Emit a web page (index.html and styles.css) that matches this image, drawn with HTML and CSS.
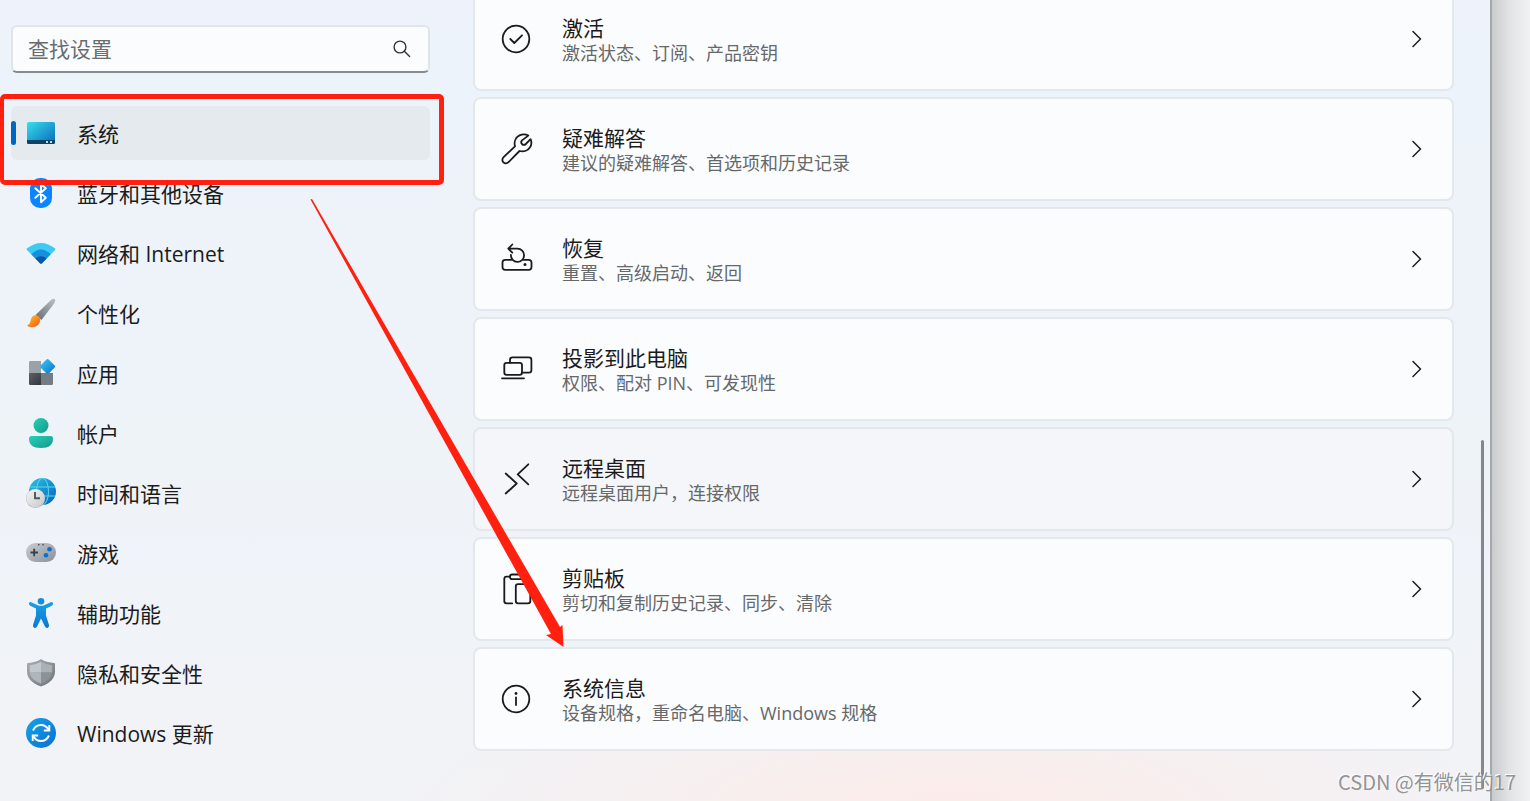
FILE: index.html
```html
<!DOCTYPE html>
<html lang="zh-CN">
<head>
<meta charset="utf-8">
<meta name="viewport" content="width=device-width, initial-scale=1">
<title>设置</title>
<link rel="stylesheet" href="styles.css">
</head>
<body>
<div class="desktop">
  <div class="window">
    <aside class="sidebar">
      <form class="search" role="search">
        <input class="search-input" type="search" placeholder="查找设置" aria-label="查找设置">
        <button class="search-button" type="button" aria-label="搜索">
          <svg width="18" height="18" viewBox="0 0 18 18" fill="none" stroke="#333" stroke-width="1.4" stroke-linecap="round"><circle cx="7" cy="7" r="5.9"/><path d="M11.3 11.3L16.6 16.6"/></svg>
        </button>
      </form>
      <nav class="nav" aria-label="设置类别">
        <a class="nav-item is-active" href="#system" aria-current="page">
          <svg class="nav-icon" viewBox="0 0 30 30"><defs><linearGradient id="g-sys" x1="0" y1="0" x2="1" y2="1"><stop offset="0" stop-color="#35e0ea"/><stop offset="1" stop-color="#0b66bd"/></linearGradient></defs><rect x="1" y="4" width="28" height="22" rx="1.8" fill="url(#g-sys)"/><path d="M1 22h28v2.4a1.6 1.6 0 0 1-1.6 1.6H2.6A1.6 1.6 0 0 1 1 24.4z" fill="#0b4566"/><path d="M20 23h2v2h-2zM24 23h2v2h-2z" fill="#b9dcec"/></svg>
          <span>系统</span>
        </a>
        <a class="nav-item" href="#bluetooth">
          <svg class="nav-icon" viewBox="0 0 30 30"><rect x="4" y="0" width="22" height="30" rx="10" fill="#0a84ff"/><path d="M9.3 10.3L19.8 19.8L15 24.2V6L19.8 10.3L9.3 19.8" fill="none" stroke="#fff" stroke-width="1.9" stroke-linejoin="round" stroke-linecap="round"/></svg>
          <span>蓝牙和其他设备</span>
        </a>
        <a class="nav-item" href="#network">
          <svg class="nav-icon" viewBox="0 0 30 30"><path d="M.8 10.500Q15-.7 29.200 10.500Q29.800 11.200 29 12L16 25.300Q15 26.200 14 25.300L1 12Q.2 11.200.8 10.500z" fill="#3ccbf4"/><path d="M5.300 16.300Q15 6.500 24.700 16.300L16 25.300Q15 26.200 14 25.300z" fill="#1490df"/><path d="M9.500 20.600Q15 15.800 20.500 20.600L16 25.300Q15 26.200 14 25.300z" fill="#0a57a5"/></svg>
          <span>网络和 Internet</span>
        </a>
        <a class="nav-item" href="#personalization">
          <svg class="nav-icon" viewBox="0 0 30 30"><defs><linearGradient id="g-handle" x1="0" y1="1" x2="1" y2="0"><stop offset="0" stop-color="#646b73"/><stop offset="1" stop-color="#bac1c9"/></linearGradient><linearGradient id="g-tip" x1="0" y1="0" x2="1" y2="1"><stop offset="0.2" stop-color="#ffae2c"/><stop offset="1" stop-color="#f0560d"/></linearGradient></defs><path d="M9.500 17L25 2Q27.500 0 29 1.200Q30 2.500 28.500 5L15.500 22z" fill="url(#g-handle)"/><path d="M1 27.500Q4 26.500 4.700 22Q5.800 17 10 17.200Q14.500 18.200 14.300 22Q13.500 29 6 29.200Q2 29.300 1 27.500z" fill="url(#g-tip)"/></svg>
          <span>个性化</span>
        </a>
        <a class="nav-item" href="#apps">
          <svg class="nav-icon" viewBox="0 0 30 30"><defs><linearGradient id="g-dark" x1="0" y1="0" x2="1" y2="1"><stop offset="0" stop-color="#5c6166"/><stop offset="1" stop-color="#33373b"/></linearGradient><linearGradient id="g-dia" x1="0" y1="0" x2="1" y2="1"><stop offset="0" stop-color="#3ccbf4"/><stop offset="1" stop-color="#0a6fd0"/></linearGradient></defs><path d="M4.200 3H15v12H3V4.200Q3 3 4.200 3z" fill="#99a1a9"/><path d="M3 15h12v12H4.200Q3 27 3 25.800z" fill="url(#g-dark)"/><path d="M15 15h12v10.800Q27 27 25.800 27H15z" fill="#757c83"/><path d="M20.500 1.500Q21.600.5 22.700 1.500L28.700 7.500Q29.700 8.500 28.700 9.500L22.700 15.500Q21.600 16.500 20.500 15.500L14.500 9.500Q13.500 8.500 14.500 7.500z" fill="url(#g-dia)"/></svg>
          <span>应用</span>
        </a>
        <a class="nav-item" href="#accounts">
          <svg class="nav-icon" viewBox="0 0 30 30"><defs><linearGradient id="g-person" x1="0" y1="0" x2="1" y2="1"><stop offset="0" stop-color="#27d0b8"/><stop offset="1" stop-color="#14998a"/></linearGradient></defs><circle cx="15" cy="7.500" r="7.500" fill="url(#g-person)"/><path d="M5.500 18h19Q27 18 27 20.500Q27 30 15 30Q3 30 3 20.500Q3 18 5.500 18z" fill="url(#g-person)"/></svg>
          <span>帐户</span>
        </a>
        <a class="nav-item" href="#time">
          <svg class="nav-icon" viewBox="0 0 30 30"><defs><linearGradient id="g-globe" x1="0" y1="0" x2="1" y2="1"><stop offset="0" stop-color="#2bc5e2"/><stop offset="1" stop-color="#075fc0"/></linearGradient><linearGradient id="g-clock" x1="0" y1="0" x2="1" y2="1"><stop offset="0" stop-color="#f5f5f5"/><stop offset="1" stop-color="#c6c8ca"/></linearGradient></defs><circle cx="16.500" cy="13.500" r="13.500" fill="url(#g-globe)"/><g fill="none" stroke="#59daf1" stroke-width="1"><ellipse cx="16.500" cy="13.500" rx="6" ry="13.300"/><path d="M4.500 9h24.500M4.500 18h24.500"/></g><circle cx="9.500" cy="20.500" r="9.500" fill="#a8afb5"/><circle cx="9.500" cy="20.200" r="9.200" fill="url(#g-clock)"/><path d="M9 14V20.200H14" fill="none" stroke="#50555a" stroke-width="1.900"/></svg>
          <span>时间和语言</span>
        </a>
        <a class="nav-item" href="#gaming">
          <svg class="nav-icon" viewBox="0 0 30 30"><defs><linearGradient id="g-pad" x1="0" y1="0" x2="1" y2="1"><stop offset="0" stop-color="#c9ced2"/><stop offset="1" stop-color="#889098"/></linearGradient></defs><rect y="5" width="30" height="19" rx="9.500" fill="url(#g-pad)"/><path d="M4.500 14.500h7.500M8.200 10.800v7.500" stroke="#3c4146" stroke-width="1.800"/><circle cx="23.500" cy="11.300" r="2.300" fill="#0a6fd0"/><circle cx="20" cy="17.300" r="2.300" fill="#0a6fd0"/><circle cx="12.800" cy="6.700" r=".8" fill="#33383d"/><circle cx="17" cy="6.700" r=".8" fill="#33383d"/></svg>
          <span>游戏</span>
        </a>
        <a class="nav-item" href="#accessibility">
          <svg class="nav-icon" viewBox="0 0 30 30"><defs><linearGradient id="g-acc" x1="0" y1="0" x2="0" y2="1"><stop offset="0" stop-color="#199fe6"/><stop offset="1" stop-color="#0a78d4"/></linearGradient></defs><circle cx="15" cy="3.300" r="3.300" fill="#128ee0"/><path d="M5.300 4.200L11.700 7.300Q15 8.400 18.300 7.300L24.700 4.200Q26.600 3.700 27 5.300Q27.300 6.800 25.800 7.700L20 10.600V17.500L23 27Q23.300 29.200 21.500 29.900Q19.700 30.200 19 28.500L15 20.500L11 28.500Q10.300 30.200 8.500 29.900Q6.700 29.200 7 27L10 17.500V10.600L4.200 7.700Q2.700 6.800 3 5.300Q3.400 3.700 5.300 4.200z" fill="url(#g-acc)"/></svg>
          <span>辅助功能</span>
        </a>
        <a class="nav-item" href="#privacy">
          <svg class="nav-icon" viewBox="0 0 30 30"><defs><linearGradient id="g-shield" x1="0" y1="0" x2="1" y2="1"><stop offset="0" stop-color="#a9afb5"/><stop offset="1" stop-color="#6c7379"/></linearGradient></defs><path d="M15 1Q20.500 4.800 28 4.900Q29 5 29 6V13.500Q29 23.500 15 28.500Q1 23.500 1 13.500V6Q1 5 2 4.900Q9.500 4.800 15 1z" fill="url(#g-shield)"/><path d="M15 3.800Q9.500 7 3.800 7.200V14.500H15z" fill="#c3c8cd"/><path d="M15 3.800Q20.500 7 26.200 7.200V14.500H15z" fill="#aab0b6"/><path d="M3.800 14.500H15V25.700Q4.300 21.500 3.800 14.500z" fill="#b0b5bb"/><path d="M26.200 14.500H15V25.700Q25.700 21.500 26.200 14.500z" fill="#8b9298"/></svg>
          <span>隐私和安全性</span>
        </a>
        <a class="nav-item" href="#update">
          <svg class="nav-icon" viewBox="0 0 30 30"><defs><linearGradient id="g-upd" x1="0" y1="0" x2="1" y2="1"><stop offset="0" stop-color="#16a3e6"/><stop offset="1" stop-color="#0a6fd2"/></linearGradient></defs><circle cx="15" cy="15" r="15" fill="url(#g-upd)"/><g fill="none" stroke="#fff" stroke-width="1.900"><path d="M7 12.500Q9.500 7 15 7Q20 7 22.700 12M23 17.500Q20.500 23 15 23Q10 23 7.300 18"/><path d="M23.300 7v5.500h-5.500M6.700 23v-5.500h5.500"/></g></svg>
          <span>Windows 更新</span>
        </a>
      </nav>
      <div class="highlight" aria-hidden="true"></div>
    </aside>

    <main class="content">
      <a class="card" href="#activation">
        <svg class="card-icon" viewBox="0 0 32 32"><circle cx="15" cy="16" r="13.300"/><path d="M9.300 16L13.300 20L21 12.300"/></svg>
        <span class="card-text"><span class="card-title">激活</span><span class="card-note">激活状态、订阅、产品密钥</span></span>
        <svg class="chevron" viewBox="0 0 10 18"><path d="M1 1.500L8.500 9L1 16.500"/></svg>
      </a>
      <a class="card" href="#troubleshoot">
        <svg class="card-icon" viewBox="0 0 32 32"><path d="M27.300 2.600C25 1.200 21.500.9 18.500 2.400C14.500 4.500 12.800 9 14 13.300L2.600 24.200C1 25.800 1 28 2.400 29.400C3.800 30.800 6 30.800 7.500 29.200L18.500 18C22.800 19.200 27.200 17.600 29.400 13.800C30.800 11 30.600 8.400 29.600 6.200L24.800 11C23.500 12.200 21.800 11.800 21 11C20 10 20 8.600 21 7.400z"/></svg>
        <span class="card-text"><span class="card-title">疑难解答</span><span class="card-note">建议的疑难解答、首选项和历史记录</span></span>
        <svg class="chevron" viewBox="0 0 10 18"><path d="M1 1.500L8.500 9L1 16.500"/></svg>
      </a>
      <a class="card" href="#recovery">
        <svg class="card-icon" viewBox="0 0 32 32"><path d="M11.300 1.500L7.300 5.700L11.300 9.700M7.500 5.700H16.500A6.600 6.600 0 1 1 9.900 12"/><path d="M10.500 16.800H4.300Q1.500 16.800 1.500 19.600V24Q1.500 26.800 4.300 26.800H27.700Q30.500 26.800 30.500 24V19.600Q30.500 16.800 27.700 16.800H22.500"/><circle class="dot" cx="24" cy="21.500" r="1.500"/></svg>
        <span class="card-text"><span class="card-title">恢复</span><span class="card-note">重置、高级启动、返回</span></span>
        <svg class="chevron" viewBox="0 0 10 18"><path d="M1 1.500L8.500 9L1 16.500"/></svg>
      </a>
      <a class="card" href="#projecting">
        <svg class="card-icon" viewBox="0 0 32 32"><rect x="3.300" y="9.800" width="17.700" height="12" rx="2.300"/><path d="M9 9.800V6.700Q9 4.300 11.400 4.300H28Q30.400 4.300 30.400 6.700V17.300Q30.400 19.700 28 19.700H21M1 25.300H23"/></svg>
        <span class="card-text"><span class="card-title">投影到此电脑</span><span class="card-note">权限、配对 PIN、可发现性</span></span>
        <svg class="chevron" viewBox="0 0 10 18"><path d="M1 1.500L8.500 9L1 16.500"/></svg>
      </a>
      <a class="card is-hovered" href="#remote">
        <svg class="card-icon" viewBox="0 0 32 32"><path d="M4.700 10.500L15.700 20.500L4.700 30.500M27.300 1.300L16.700 11.300L27.300 21.300"/></svg>
        <span class="card-text"><span class="card-title">远程桌面</span><span class="card-note">远程桌面用户，连接权限</span></span>
        <svg class="chevron" viewBox="0 0 10 18"><path d="M1 1.500L8.500 9L1 16.500"/></svg>
      </a>
      <a class="card" href="#clipboard">
        <svg class="card-icon" viewBox="0 0 32 32"><path d="M9 3.700H5.600Q3.300 3.700 3.300 6V28Q3.300 30.300 5.600 30.300H11.300M20.700 3.700H24Q26.300 3.700 26.300 6V8"/><rect x="9" y="1.500" width="11.700" height="4.600" rx="2.200"/><rect x="14.800" y="11.200" width="14.500" height="19.100" rx="2.300"/></svg>
        <span class="card-text"><span class="card-title">剪贴板</span><span class="card-note">剪切和复制历史记录、同步、清除</span></span>
        <svg class="chevron" viewBox="0 0 10 18"><path d="M1 1.500L8.500 9L1 16.500"/></svg>
      </a>
      <a class="card" href="#about">
        <svg class="card-icon" viewBox="0 0 32 32"><circle cx="15" cy="16" r="13.300"/><path d="M15 14.500V22"/><circle class="dot" cx="15" cy="10.500" r="1.400"/></svg>
        <span class="card-text"><span class="card-title">系统信息</span><span class="card-note">设备规格，重命名电脑、Windows 规格</span></span>
        <svg class="chevron" viewBox="0 0 10 18"><path d="M1 1.500L8.500 9L1 16.500"/></svg>
      </a>
    </main>
    <div class="scroll-thumb" aria-hidden="true"></div>
    <svg class="arrow" width="260" height="450" viewBox="0 0 260 450" aria-hidden="true"><path d="M.5.500L2 0L250 428L252.500 426L253.500 448L236 436L241 435z" fill="#ff2010"/></svg>
  </div>
  <div class="watermark">CSDN @有微信的17</div>
</div>
</body>
</html>
```
FILE: styles.css
```css
* {
  box-sizing: border-box;
}

body {
  margin: 0;
  font-family: "Open Sans", "Noto Sans CJK SC", sans-serif;
  color: #1b1b1b;
}

.desktop {
  position: relative;
  min-height: 100vh;
  padding-right: 38px;
  overflow: hidden;
  background: linear-gradient(to left, #f0f1f2 0, #e3e4e5 20px, #c9cbcc 38px);
}

.window {
  position: relative;
  display: flex;
  gap: 43px;
  min-height: 100vh;
  padding-right: 36px;
  border-right: 2px solid #a5a8aa;
  background:
    radial-gradient(ellipse 560px 170px at 64% 102%, #fcebe8 0, rgba(252, 235, 232, 0) 100%),
    linear-gradient(#eef3fb 0, #edf3f8 45%, #f0f3f9 70%, #f2f3f7 100%);
}

.sidebar {
  flex: 0 0 430px;
  padding: 25px 0 0 11px;
}

.search {
  display: flex;
  align-items: center;
  height: 48px;
  margin-bottom: 33px;
  border: 2px solid #e1e5e9;
  border-bottom-color: #868b8e;
  border-radius: 6px;
  background: #fbfcfe;
}

.search-input {
  flex: 1;
  min-width: 0;
  padding: 0 0 0 15px;
  border: 0;
  outline: 0;
  background: transparent;
  font: inherit;
  font-size: 21px;
}

.search-input::placeholder {
  color: #6a6c70;
  opacity: 1;
}

.search-button {
  display: flex;
  padding: 4px 17px;
  border: 0;
  background: transparent;
}

.nav {
  display: grid;
  gap: 6px;
}

.nav-item {
  position: relative;
  display: flex;
  align-items: center;
  gap: 21px;
  height: 54px;
  padding-left: 15px;
  border-radius: 6px;
  color: inherit;
  font-size: 21px;
  line-height: 30px;
  text-decoration: none;
}

.nav-item span {
  padding-top: 2px;
}

.nav-item.is-active {
  background: #e5eaee;
}

.nav-item.is-active::before {
  content: "";
  position: absolute;
  left: 0;
  top: 15px;
  width: 5px;
  height: 24px;
  border-radius: 3px;
  background: #0067c0;
}

.nav-icon {
  flex: none;
  width: 30px;
  height: 30px;
}

.highlight {
  position: absolute;
  left: 0;
  top: 94px;
  width: 444px;
  height: 91px;
  border: 5px solid #ff2010;
  border-left-width: 4px;
  border-radius: 5px;
}

.content {
  display: flex;
  flex: 1;
  flex-direction: column;
  gap: 6px;
  min-width: 0;
  margin-top: -13px;
  padding-bottom: 48px;
}

.card {
  display: flex;
  align-items: center;
  gap: 29px;
  height: 104px;
  padding: 0 30px 0 26px;
  border: 2px solid #e3e8ec;
  border-radius: 8px;
  background: #fbfcfe;
  color: inherit;
  text-decoration: none;
}

.card.is-hovered {
  background: #f4f6f9;
}

.card-icon,
.chevron {
  flex: none;
  fill: none;
  stroke: #1b1b1b;
  stroke-width: 1.8;
  stroke-linecap: round;
  stroke-linejoin: round;
}

.card-icon {
  width: 32px;
  height: 32px;
}

.card-icon .dot {
  fill: #1b1b1b;
  stroke: none;
}

.chevron {
  width: 10px;
  height: 18px;
  stroke-width: 1.5;
}

.card-text {
  display: flex;
  flex: 1;
  flex-direction: column;
  min-width: 0;
  padding-top: 2px;
}

.card-title {
  font-size: 21px;
  line-height: 26px;
}

.card-note {
  color: #66686a;
  font-size: 18px;
  line-height: 24px;
}

.scroll-thumb {
  position: absolute;
  right: 6px;
  top: 440px;
  bottom: 12px;
  width: 3px;
  border-radius: 2px;
  background: #858789;
}

.arrow {
  position: absolute;
  left: 310px;
  top: 199px;
}

.watermark {
  position: absolute;
  right: 14px;
  bottom: 6px;
  color: #929496;
  font-family: "Noto Sans CJK SC", sans-serif;
  font-size: 20px;
  line-height: 26px;
  text-shadow: -1px -1px 0 #fff;
}
```
